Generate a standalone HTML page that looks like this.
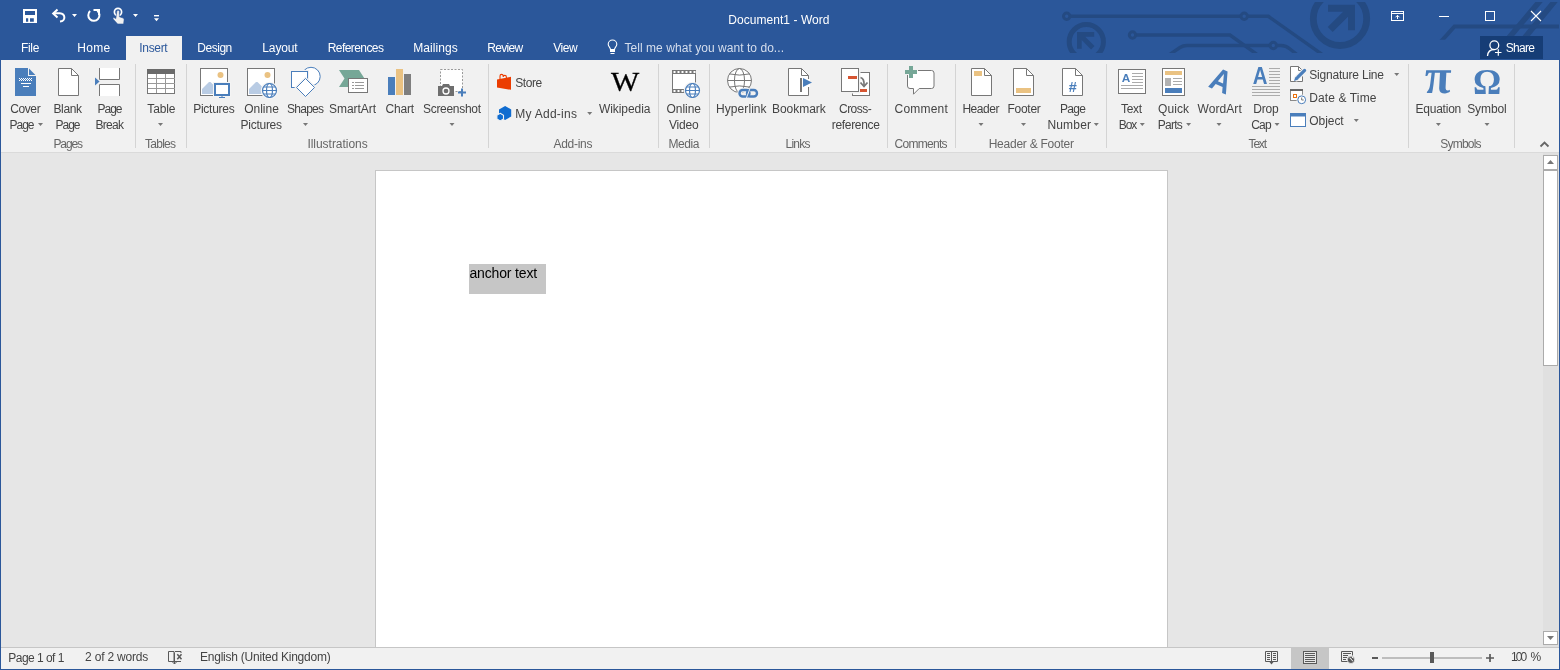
<!DOCTYPE html>
<html lang="en"><head><meta charset="utf-8"><title>Document1 - Word</title>
<style>
html,body{margin:0;padding:0}
body{width:1560px;height:670px;overflow:hidden;position:relative;background:#e6e6e6;font-family:"Liberation Sans",sans-serif}
.t{position:absolute;white-space:pre;line-height:16px;font-family:"Liberation Sans",sans-serif}
#title{position:absolute;left:0;top:0;width:1560px;height:60px;background:#2b579a}
#tab{position:absolute;left:126px;top:36px;width:56px;height:24px;background:#f1f1f1}
#ribbon{position:absolute;left:0;top:60px;width:1560px;height:92px;background:#f1f1f1;border-bottom:1px solid #dadada}
#page{position:absolute;left:375px;top:170px;width:791px;height:500px;background:#fff;border:1px solid #c6c6c6}
#sel{position:absolute;left:469px;top:264px;width:77px;height:30px;background:#c6c6c6}
#status{position:absolute;left:0;top:647px;width:1560px;height:22px;background:#f1f1f1;border-top:1px solid #c6c6c6;box-sizing:border-box}
#bl,#br,#bb{position:absolute;background:#2b579a}
#bl{left:0;top:0;width:1px;height:670px}
#br{left:1559px;top:0;width:1px;height:670px}
#bb{left:0;top:669px;width:1560px;height:1px}
svg{position:absolute;left:0;top:0;will-change:opacity}
#txt{position:absolute;left:0;top:0;width:1560px;height:670px;will-change:opacity}
.w{position:absolute;font-family:"Liberation Serif",serif;color:#000;line-height:1;white-space:pre}
</style></head>
<body>
<div id="title"></div>
<div id="tab"></div>
<div id="ribbon"></div>
<div id="page"></div>
<div id="sel"></div>
<div id="status"></div>
<svg width="1560" height="670" viewBox="0 0 1560 670">
<defs><clipPath id="pc"><rect x="1040" y="2" width="520" height="51"/></clipPath></defs>
<g clip-path="url(#pc)" fill="none" stroke="#244a82" stroke-width="3.400">
<circle cx="1066.700" cy="16.300" r="3.200" stroke-width="3"/><path d="M1070.500 16.300H1240.500"/><circle cx="1244.200" cy="16.300" r="3.200" stroke-width="3"/><path d="M1248 16.300H1268.300L1330 60"/>
<circle cx="1132.500" cy="35" r="3.200" stroke-width="3"/><path d="M1136.300 35H1230L1262 58"/>
<path d="M1166 57L1180 47.500Q1183 45.500 1187 45.500H1269.500"/><circle cx="1273.300" cy="45.500" r="3.200" stroke-width="3"/><path d="M1277 45.500H1281Q1286 45.500 1290 49L1300 57"/>
<circle cx="1086.300" cy="41.700" r="17.100" stroke-width="5"/>
<path d="M1077 32h17.200v4.700h-9l9.300 9.300-3.400 3.400-9.400-9.400v8.700h-4.700z" fill="#244a82" stroke="none"/>
<circle cx="1340" cy="18.800" r="26.700" stroke-width="6.800"/>
<path d="M1328 4.800h27v25.500h-7v-13.600l-15.300 15.300-4.900-4.900 15.300-15.300h-15.100z" fill="#244a82" stroke="none"/>
</g>
<defs><clipPath id="pc2"><rect x="1400" y="2" width="160" height="37.700"/></clipPath></defs>
<g clip-path="url(#pc2)" fill="none" stroke="#244a82"><path d="M1560 26.500H1454.500L1438 44.800" stroke-width="4"/><path d="M1505.400 42L1541 -.3M1521.300 42L1555.700 0" stroke-width="5.600"/></g>
<g fill="none" stroke="#fff">
<path d="M23 9h14v14h-14z M25 11v4h10v-4z M26 18.200v3.500h2.200v-3.500z M30 18.200v3.500h3.800v-3.500z" fill="#fff" fill-rule="evenodd" stroke="none"/>
<path d="M57.500 9.500l-4.300 4 4.300 4" stroke-width="2"/><path d="M53.500 13.300h6.200a5.300 4.200 0 0 1 .3 8.300" stroke-width="2"/>
<path d="M97.300 10.800a5.600 5.600 0 1 1-7.200 .3" stroke-width="2"/><path d="M93.500 10h5.500v5" stroke-width="2"/>
</g>
<path d="M72 14h5l-2.500 3zM133 14h5l-2.500 3zM154 18.300h5l-2.500 3z" fill="#fff"/><rect x="154" y="15" width="5" height="1.400" fill="#fff"/>
<circle cx="118" cy="12" r="3.600" fill="none" stroke="#fff" stroke-width="1.700"/>
<path d="M116.800 11.500a1.300 1.300 0 0 1 2.600 0v5.300l3.700 1.200q1.200.5 1 1.800l-.5 4.200h-6l-4.500-5q-.6-1.200.7-1.600l2 1.200z" fill="#f0f0f0" stroke="#2b579a" stroke-width=".6"/>
<path d="M610.500 49.500c0-2-2.300-2.800-2.300-5.200a4.300 4.300 0 0 1 8.600 0c0 2.400-2.300 3.200-2.300 5.200z" fill="none" stroke="#fff" stroke-width="1.100"/><path d="M610 51h5" stroke="#fff" stroke-width="2"/><path d="M610.500 53.500h4" stroke="#fff" stroke-width="1"/>
<g fill="none" stroke="#fff" shape-rendering="crispEdges"><rect x="1391.500" y="11.500" width="12" height="9"/><path d="M1392 13.500h12"/><rect x="1485.500" y="11.500" width="9" height="9"/><path d="M1439 16.500h10"/></g>
<path d="M1397.500 19v-3.500M1395.500 17.300l2-2 2 2" fill="none" stroke="#fff" stroke-width="1"/>
<path d="M1531 11l10 10M1541 11l-10 10" stroke="#fff" stroke-width="1.100" fill="none"/>
<rect x="1480" y="36" width="63" height="23" fill="#163d76"/>
<circle cx="1494.300" cy="45.300" r="4.400" fill="none" stroke="#fff" stroke-width="1.300"/><path d="M1487.500 56q.5-6.500 6.800-6.500" fill="none" stroke="#fff" stroke-width="1.300"/><path d="M1495 52.500h6.500M1498.300 49.200v6.600" stroke="#fff" stroke-width="1.200" fill="none"/>
<rect x="135" y="64" width="1" height="84" fill="#d4d4d4" shape-rendering="crispEdges"/>
<rect x="186" y="64" width="1" height="84" fill="#d4d4d4" shape-rendering="crispEdges"/>
<rect x="488" y="64" width="1" height="84" fill="#d4d4d4" shape-rendering="crispEdges"/>
<rect x="658" y="64" width="1" height="84" fill="#d4d4d4" shape-rendering="crispEdges"/>
<rect x="709" y="64" width="1" height="84" fill="#d4d4d4" shape-rendering="crispEdges"/>
<rect x="887" y="64" width="1" height="84" fill="#d4d4d4" shape-rendering="crispEdges"/>
<rect x="955" y="64" width="1" height="84" fill="#d4d4d4" shape-rendering="crispEdges"/>
<rect x="1106" y="64" width="1" height="84" fill="#d4d4d4" shape-rendering="crispEdges"/>
<rect x="1408" y="64" width="1" height="84" fill="#d4d4d4" shape-rendering="crispEdges"/>
<rect x="1514" y="64" width="1" height="84" fill="#d4d4d4" shape-rendering="crispEdges"/>
<path d="M15 68h13v8h8v20h-21z" fill="#4a7ebb"/><path d="M29 68.6l6.4 6.4h-6.4z" fill="#4a7ebb"/>
<path d="M19 78.5h13M19 80.5h13" stroke="#fff" stroke-width="1" stroke-dasharray="1 1" shape-rendering="crispEdges"/><path d="M20 79.5h12" stroke="#fff" stroke-width="1" stroke-dasharray="1 1" shape-rendering="crispEdges"/>
<rect x="21" y="83" width="10" height="1" fill="#fff"/><rect x="23" y="86" width="6" height="1" fill="#fff"/>
<path d="M38.0 123h5l-2.5 3z" fill="#777"/>
<path d="M58.5 68.5H71.5L78.5 75.5V95.5H58.5z" fill="#fff" stroke="#777"/><path d="M71.5 68.5V75.5H78.5" fill="none" stroke="#777"/>
<path d="M99.5 68v11.5h20V68M99.5 96v-11.5h20V96" fill="#fff" stroke="#777"/>
<path d="M95 77.600l4.600 3.900-4.600 3.900z" fill="#4a7ebb"/>
<rect x="147.5" y="69.5" width="27" height="24" fill="#fff" stroke="#777"/><rect x="147" y="69" width="28" height="5" fill="#6a6a6a"/>
<path d="M156.5 74v19M165.5 74v19M148 78.5h27M148 83.5h27M148 88.5h27" stroke="#999" fill="none" shape-rendering="crispEdges"/>
<path d="M158.0 123h5l-2.5 3z" fill="#777"/>
<rect x="200.5" y="68.5" width="27" height="27" fill="#fff" stroke="#777"/>
<circle cx="220.5" cy="75" r="3" fill="#eac282"/>
<path d="M202 94v-5l7-7h1.500l5.500 5.500v6.500z" fill="#b9cce4"/>
<rect x="213" y="82" width="18" height="15" fill="#f4f4f4"/>
<rect x="215" y="84" width="14" height="11" fill="#fff" stroke="#4a7ebb" stroke-width="2"/><path d="M222 96v1.500M219 97.500h6" stroke="#4a7ebb" fill="none"/>
<rect x="247.5" y="68.5" width="27" height="27" fill="#fff" stroke="#777"/>
<circle cx="267.5" cy="75" r="3" fill="#eac282"/>
<path d="M249 94v-5l7-7h1.500l5.500 5.500v6.500z" fill="#b9cce4"/>
<circle cx="269.500" cy="90.500" r="8.800" fill="#f4f4f4"/>
<g fill="none" stroke="#4a7ebb" stroke-width="1.2"><circle cx="269.5" cy="90.5" r="7" fill="#fff"/><ellipse cx="269.5" cy="90.5" rx="2.94" ry="7"/><path d="M262.5 90.5h14M263.48 87.00h12.04M263.48 94.00h12.04"/></g>
<circle cx="311" cy="76.500" r="9.200" fill="#fff" stroke="#4a7ebb"/>
<rect x="291.500" y="71.500" width="16" height="16" fill="none" stroke="#f1f1f1" stroke-width="3"/>
<rect x="291.500" y="71.500" width="16" height="16" fill="#fff" stroke="#4a7ebb"/>
<path d="M305.500 78.500l9 9-9 9-9-9z" fill="none" stroke="#f1f1f1" stroke-width="3"/>
<path d="M305.500 78.500l9 9-9 9-9-9z" fill="#fff" stroke="#4a7ebb"/>
<path d="M303.0 123h5l-2.5 3z" fill="#777"/>
<path d="M339 70h20l5.500 8.500-5.500 8.500h-20l5.500-8.500z" fill="#76a797"/>
<rect x="348.500" y="78.500" width="19" height="14" fill="#fff" stroke="#777"/>
<path d="M352 82.500h2M355 82.500h9M352 85.500h2M355 85.500h9M352 88.500h2M355 88.500h9" stroke="#999" shape-rendering="crispEdges"/>
<rect x="388" y="77" width="7" height="18" fill="#4a7ebb"/><rect x="396" y="69" width="7" height="26" fill="#eac282"/><rect x="404" y="74" width="7" height="21" fill="#7f7f7f"/>
<rect x="440.500" y="69.500" width="22" height="22" fill="#fff" stroke="#999" stroke-dasharray="2 1.500"/>
<path d="M438 86h4l1-2h6l1 2h4v10h-16z" fill="#6e6e6e"/><circle cx="446" cy="91" r="3" fill="#6e6e6e" stroke="#fff" stroke-width="1.300"/>
<path d="M458 92.500h8M462 88.500v8" stroke="#4a7ebb" stroke-width="2" fill="none"/>
<path d="M449.5 123h5l-2.5 3z" fill="#777"/>
<path d="M497 79.500l14-2.700v13l-14-2.300z" fill="#eb3c00"/>
<path d="M500 79.500v-3.400a1.600 1.700 0 0 1 3.200 0v1a1.600 1.700 0 0 1 3.200 0v2" fill="none" stroke="#eb3c00" stroke-width="1.100"/>
<path d="M505.100 105.900l6.100 3.500v7.100l-6.100 3.500-6.100-3.500v-7.100z" fill="#0f6cd0"/>
<path d="M500.200 113.300l3.300 1.900v3.800l-3.300 1.900-3.300-1.900v-3.800z" fill="#0f6cd0" stroke="#f1f1f1" stroke-width="1.100"/>
<path d="M587.2 112h5l-2.5 3z" fill="#777"/>
<rect x="672.500" y="70.500" width="23" height="22" fill="#fff" stroke="#777"/>
<rect x="672" y="70" width="24" height="4" fill="#777"/><rect x="672" y="89" width="24" height="4" fill="#777"/>
<path d="M673.500 72h22M673.500 91h22" stroke="#fff" stroke-width="2" stroke-dasharray="2 2" fill="none"/>
<circle cx="692.500" cy="90.500" r="8.800" fill="#f1f1f1"/>
<g fill="none" stroke="#4a7ebb" stroke-width="1.2"><circle cx="692.5" cy="90.5" r="7" fill="#fff"/><ellipse cx="692.5" cy="90.5" rx="2.94" ry="7"/><path d="M685.5 90.5h14M686.48 87.00h12.04M686.48 94.00h12.04"/></g>
<g fill="none" stroke="#777" stroke-width="1"><circle cx="739.5" cy="80.5" r="12" fill="#fff"/><ellipse cx="739.5" cy="80.5" rx="5.04" ry="12"/><path d="M727.5 80.5h24M729.18 73.90Q739.5 76.30 749.82 73.90M729.18 87.10Q739.5 84.70 749.82 87.10"/></g>
<g fill="none" stroke="#f1f1f1" stroke-width="4.500"><rect x="739.500" y="90" width="10" height="6.500" rx="3.250"/><rect x="747" y="90" width="10" height="6.500" rx="3.250"/></g>
<g fill="none" stroke="#4a7ebb" stroke-width="2.400"><rect x="739.500" y="90" width="10" height="6.500" rx="3.250"/><rect x="747" y="90" width="10" height="6.500" rx="3.250"/></g>
<path d="M746.300 98.200l3.600-9.400" stroke="#e8eef6" stroke-width="1" fill="none"/>
<path d="M788.5 68.5H801.5L808.5 75.5V95.5H788.5z" fill="#fff" stroke="#777"/><path d="M801.5 68.5V75.5H808.5" fill="none" stroke="#777"/>
<rect x="807" y="79" width="3" height="8" fill="#fff"/>
<rect x="800" y="78" width="2" height="14" fill="#777"/><path d="M803 78l9 4.500-9 4.500z" fill="#4a7ebb"/>
<rect x="852.500" y="72.500" width="17" height="23" fill="#fff" stroke="#777"/>
<rect x="839.500" y="66.500" width="21" height="27" fill="#f1f1f1"/>
<rect x="841.500" y="68.500" width="17" height="23" fill="#fff" stroke="#777"/>
<rect x="848" y="76" width="9" height="3" fill="#d65532"/><rect x="860" y="89" width="7" height="3" fill="#d65532"/>
<path d="M860.500 77.500q4 1 3.500 8" fill="none" stroke="#777" stroke-width="1.800"/><path d="M860.500 82.500l3.500 4 3.500-4" fill="none" stroke="#777" stroke-width="1.800"/>
<path d="M918 70.500h13.500a2.500 2.500 0 0 1 2.500 2.500v13a2.500 2.500 0 0 1-2.500 2.500h-12.300l-5.700 5.700v-5.700h-3.500a2.500 2.500 0 0 1-2.500-2.500v-11" fill="#fff" stroke="#777"/>
<path d="M909 66h4v4h4v4h-4v4h-4v-4h-4v-4h4z" fill="#76a797"/>
<path d="M971.5 68.5H984.5L991.5 75.5V95.5H971.5z" fill="#fff" stroke="#777"/><path d="M984.5 68.5V75.5H991.5" fill="none" stroke="#777"/>
<rect x="974" y="71" width="8" height="5" fill="#eac282"/>
<path d="M978.5 123h5l-2.5 3z" fill="#777"/>
<path d="M1013.5 68.5H1026.5L1033.5 75.5V95.5H1013.5z" fill="#fff" stroke="#777"/><path d="M1026.5 68.5V75.5H1033.5" fill="none" stroke="#777"/>
<rect x="1016" y="88" width="15" height="5" fill="#eac282"/>
<path d="M1021.0 123h5l-2.5 3z" fill="#777"/>
<path d="M1062.5 68.5H1075.5L1082.5 75.5V95.5H1062.5z" fill="#fff" stroke="#777"/><path d="M1075.5 68.5V75.5H1082.5" fill="none" stroke="#777"/>
<text x="1072.500" y="92" font-family="Liberation Sans, sans-serif" font-size="14.500" font-style="italic" font-weight="bold" fill="#4a7ebb" text-anchor="middle">#</text>
<path d="M1093.8 123h5l-2.5 3z" fill="#777"/>
<rect x="1118.500" y="69.500" width="27" height="24" fill="#fff" stroke="#777"/>
<text x="1126" y="82" font-family="Liberation Sans, sans-serif" font-size="11.800" font-weight="bold" fill="#4a7ebb" text-anchor="middle">A</text>
<path d="M1132 73.500h11M1132 76.500h11M1132 79.500h11M1132 82.500h11M1121 85.500h22M1121 88.500h22" stroke="#ababab" fill="none" shape-rendering="crispEdges"/>
<path d="M1139.8 123h5l-2.5 3z" fill="#777"/>
<rect x="1162.500" y="68.500" width="22" height="27" fill="#fff" stroke="#777"/>
<rect x="1165" y="71" width="17" height="4" fill="#eac282"/><rect x="1165" y="78" width="6" height="8" fill="#b2b2b2"/><rect x="1165" y="88" width="17" height="5" fill="#4a7ebb"/>
<path d="M1173 78.500h9M1173 81.500h9M1173 84.500h9" stroke="#ababab" fill="none" shape-rendering="crispEdges"/>
<path d="M1186.1 123h5l-2.5 3z" fill="#777"/>
<text x="0" y="0" font-family="Liberation Sans, sans-serif" font-size="30" font-weight="bold" fill="#4a7ebb" transform="matrix(0.881 0.387 -0.401 0.978 1207.390 86.570)">A</text>
<path d="M1216.5 123h5l-2.5 3z" fill="#777"/>
<text x="0" y="0" font-family="Liberation Sans, sans-serif" font-size="23.200" font-weight="bold" fill="#4a7ebb" transform="translate(1252.700 84) scale(.88 1)">A</text>
<path d="M1269 68.500h11M1269 71.500h11M1269 74.500h11M1269 77.500h11M1269 80.500h11M1269 83.500h11M1252 86.500h28M1252 89.500h28M1252 92.500h28M1252 95.500h28" stroke="#ababab" fill="none" shape-rendering="crispEdges"/>
<path d="M1274.5 123h5l-2.5 3z" fill="#777"/>
<path d="M1290.5 66.5H1298.5L1302.5 70.5V81.5H1290.5z" fill="#fff" stroke="#777"/><path d="M1298.5 66.5V70.5H1302.5" fill="none" stroke="#777"/>
<path d="M1305 70l-8.500 8.500" stroke="#f1f1f1" stroke-width="5.500" fill="none" stroke-linecap="round"/><path d="M1304.600 70.400l-7 7" stroke="#4a7ebb" stroke-width="3.200" fill="none" stroke-linecap="round"/><path d="M1294 81l1.500-4.300 2.800 2.800z" fill="#4a7ebb"/>
<path d="M1394.2 73h5l-2.5 3z" fill="#777"/>
<rect x="1290.500" y="89.500" width="12" height="11" fill="#fff" stroke="#8a8a8a"/><rect x="1290" y="89" width="13" height="2" fill="#666"/>
<rect x="1293.500" y="94.500" width="3" height="3" fill="#fff" stroke="#e8700f"/>
<circle cx="1301.700" cy="99.800" r="5.200" fill="#f1f1f1"/><circle cx="1301.700" cy="99.800" r="3.900" fill="#fff" stroke="#4a7ebb"/><path d="M1301.700 97.500v2.500h2" fill="none" stroke="#666" stroke-width=".9"/>
<rect x="1290.500" y="113.500" width="15" height="13" fill="#fff" stroke="#4a7ebb"/><rect x="1290" y="113" width="16" height="3.500" fill="#4a7ebb"/>
<path d="M1353.8 119h5l-2.5 3z" fill="#777"/>
<text x="0" y="0" font-family="Liberation Serif, serif" font-size="49.500" font-weight="bold" font-style="italic" fill="#4a7ebb" transform="translate(1426.600 92.800) scale(.975 1) skewX(7)">π</text>
<text x="0" y="0" font-family="Liberation Serif, serif" font-size="35.300" font-weight="bold" fill="#4a7ebb" transform="translate(1473 93.500) scale(1 1)">Ω</text>
<path d="M1435.9 123h5l-2.5 3z" fill="#777"/>
<path d="M1484.5 123h5l-2.5 3z" fill="#777"/>
<path d="M1540.500 146.500l4-4 4 4" fill="none" stroke="#666" stroke-width="1.800"/>
<g fill="none" stroke="#595959"><path d="M168.500 651.500h5.500v10h-5.500z"/><path d="M174.500 652.500v11.500M172.500 662l2 2 2-2"/><path d="M175 651.500h6v1.500M175 661.500h6"/></g>
<path d="M177.300 654.200l4.200 5M181.500 654.200l-4.200 5" stroke="#595959" stroke-width="1.500" fill="none"/>
<g fill="none" stroke="#595959"><path d="M1265.500 651.500h12v10h-12z"/><path d="M1271.500 652v10.500"/><path d="M1267 653.500h3M1267 655.500h3M1267 657.500h3M1267 659.500h3M1273 653.500h3M1273 655.500h3M1273 657.500h3M1273 659.500h3" shape-rendering="crispEdges"/></g><path d="M1269.500 662h4l-2 2.400z" fill="#595959"/>
<rect x="1291" y="648" width="38" height="21" fill="#c6c6c6"/>
<rect x="1303.500" y="651.500" width="13" height="12" fill="#e6e6e6" stroke="#595959"/><path d="M1305 653.500h10M1305 655.500h10M1305 657.500h10M1305 659.500h10M1305 661.500h10" stroke="#595959" shape-rendering="crispEdges"/>
<path d="M1349 661.500h-7.500v-10h11v4" fill="none" stroke="#595959"/><path d="M1343 653.500h8M1343 655.500h5M1343 657.500h4M1343 659.500h3" stroke="#595959" shape-rendering="crispEdges"/>
<circle cx="1351" cy="659.800" r="3.700" fill="#595959" stroke="#f1f1f1" stroke-width=".8"/><path d="M1349.500 658l1.500.5.500 1.500 1.500 1M1352 657l1.200 1.200" stroke="#f1f1f1" stroke-width="1" fill="none"/>
<rect x="1372" y="657" width="6" height="2" fill="#595959"/><rect x="1382" y="657.500" width="100" height="1" fill="#8a8a8a"/><rect x="1430" y="652" width="4" height="11" fill="#595959"/>
<path d="M1486 658h8M1490 654v8" stroke="#595959" stroke-width="1.700" fill="none"/>
<rect x="1543" y="153" width="16" height="494" fill="#e0e0e0"/>
<g fill="#fff" stroke="#ababab" shape-rendering="crispEdges"><rect x="1543.500" y="155.500" width="14" height="14"/><rect x="1543.500" y="170.500" width="14" height="195"/><rect x="1543.500" y="631.500" width="14" height="13"/></g>
<path d="M1547 164h7l-3.500-4zM1547 636h7l-3.500 4z" fill="#777"/>
</svg>
<div id="txt">
<span class="w" id="wiki" style="left:611px;top:67.7px;font-size:27.7px;transform-origin:0 0;transform:scaleX(1.08);-webkit-text-stroke:.3px #000">W</span>
<span class="t " style="left:728.30px;top:12.00px;font-size:12px;letter-spacing:0.047px;color:#fff;">Document1 - Word</span>
<span class="t " style="left:21.00px;top:40.00px;font-size:12px;letter-spacing:-0.340px;color:#fff;">File</span>
<span class="t " style="left:77.30px;top:40.00px;font-size:12px;letter-spacing:0.287px;color:#fff;">Home</span>
<span class="t " style="left:139.30px;top:40.00px;font-size:12px;letter-spacing:-0.320px;color:#2b579a;">Insert</span>
<span class="t " style="left:197.30px;top:40.00px;font-size:12px;letter-spacing:-0.476px;color:#fff;">Design</span>
<span class="t " style="left:262.30px;top:40.00px;font-size:12px;letter-spacing:-0.132px;color:#fff;">Layout</span>
<span class="t " style="left:327.70px;top:40.00px;font-size:12px;letter-spacing:-0.564px;color:#fff;">References</span>
<span class="t " style="left:413.30px;top:40.00px;font-size:12px;letter-spacing:0.051px;color:#fff;">Mailings</span>
<span class="t " style="left:487.30px;top:40.00px;font-size:12px;letter-spacing:-0.672px;color:#fff;">Review</span>
<span class="t " style="left:553.30px;top:40.00px;font-size:12px;letter-spacing:-0.467px;color:#fff;">View</span>
<span class="t " style="left:624.50px;top:40.00px;font-size:12px;letter-spacing:0.048px;color:#d5deed;">Tell me what you want to do...</span>
<span class="t " style="left:1505.70px;top:40.00px;font-size:12px;letter-spacing:-0.685px;color:#fff;">Share</span>
<span class="t " style="left:10.20px;top:101.00px;font-size:12px;letter-spacing:-0.385px;color:#444;">Cover</span>
<span class="t " style="left:9.50px;top:117.00px;font-size:12px;letter-spacing:-1.007px;color:#444;">Page</span>
<span class="t " style="left:53.50px;top:101.00px;font-size:12px;letter-spacing:-0.390px;color:#444;">Blank</span>
<span class="t " style="left:55.50px;top:117.00px;font-size:12px;letter-spacing:-1.007px;color:#444;">Page</span>
<span class="t " style="left:97.50px;top:101.00px;font-size:12px;letter-spacing:-1.007px;color:#444;">Page</span>
<span class="t " style="left:95.50px;top:117.00px;font-size:12px;letter-spacing:-0.720px;color:#444;">Break</span>
<span class="t " style="left:147.30px;top:101.00px;font-size:12px;letter-spacing:-0.170px;color:#444;">Table</span>
<span class="t " style="left:193.20px;top:101.00px;font-size:12px;letter-spacing:-0.260px;color:#444;">Pictures</span>
<span class="t " style="left:244.30px;top:101.00px;font-size:12px;letter-spacing:-0.036px;color:#444;">Online</span>
<span class="t " style="left:240.50px;top:117.00px;font-size:12px;letter-spacing:-0.260px;color:#444;">Pictures</span>
<span class="t " style="left:287.00px;top:101.00px;font-size:12px;letter-spacing:-0.736px;color:#444;">Shapes</span>
<span class="t " style="left:329.00px;top:101.00px;font-size:12px;letter-spacing:-0.049px;color:#444;">SmartArt</span>
<span class="t " style="left:385.50px;top:101.00px;font-size:12px;letter-spacing:-0.210px;color:#444;">Chart</span>
<span class="t " style="left:423.00px;top:101.00px;font-size:12px;letter-spacing:-0.302px;color:#444;">Screenshot</span>
<span class="t " style="left:515.30px;top:75.00px;font-size:12px;letter-spacing:-0.445px;color:#444;">Store</span>
<span class="t " style="left:515.30px;top:106.00px;font-size:12px;letter-spacing:0.251px;color:#444;">My Add-ins</span>
<span class="t " style="left:599.00px;top:101.00px;font-size:12px;letter-spacing:-0.072px;color:#444;">Wikipedia</span>
<span class="t " style="left:666.50px;top:101.00px;font-size:12px;letter-spacing:-0.036px;color:#444;">Online</span>
<span class="t " style="left:669.00px;top:117.00px;font-size:12px;letter-spacing:-0.220px;color:#444;">Video</span>
<span class="t " style="left:716.00px;top:101.00px;font-size:12px;letter-spacing:0.075px;color:#444;">Hyperlink</span>
<span class="t " style="left:772.00px;top:101.00px;font-size:12px;letter-spacing:-0.037px;color:#444;">Bookmark</span>
<span class="t " style="left:839.00px;top:101.00px;font-size:12px;letter-spacing:-0.528px;color:#444;">Cross-</span>
<span class="t " style="left:831.70px;top:117.00px;font-size:12px;letter-spacing:-0.300px;color:#444;">reference</span>
<span class="t " style="left:894.50px;top:101.00px;font-size:12px;letter-spacing:0.213px;color:#444;">Comment</span>
<span class="t " style="left:962.40px;top:101.00px;font-size:12px;letter-spacing:-0.432px;color:#444;">Header</span>
<span class="t " style="left:1007.50px;top:101.00px;font-size:12px;letter-spacing:-0.276px;color:#444;">Footer</span>
<span class="t " style="left:1060.00px;top:101.00px;font-size:12px;letter-spacing:-0.673px;color:#444;">Page</span>
<span class="t " style="left:1047.40px;top:117.00px;font-size:12px;letter-spacing:0.188px;color:#444;">Number</span>
<span class="t " style="left:1121.00px;top:101.00px;font-size:12px;letter-spacing:-0.340px;color:#444;">Text</span>
<span class="t " style="left:1118.80px;top:117.00px;font-size:12px;letter-spacing:-1.100px;color:#444;">Box</span>
<span class="t " style="left:1158.00px;top:101.00px;font-size:12px;letter-spacing:0.070px;color:#444;">Quick</span>
<span class="t " style="left:1157.70px;top:117.00px;font-size:12px;letter-spacing:-0.730px;color:#444;">Parts</span>
<span class="t " style="left:1197.50px;top:101.00px;font-size:12px;letter-spacing:0.083px;color:#444;">WordArt</span>
<span class="t " style="left:1253.30px;top:101.00px;font-size:12px;letter-spacing:-0.213px;color:#444;">Drop</span>
<span class="t " style="left:1251.30px;top:117.00px;font-size:12px;letter-spacing:-0.860px;color:#444;">Cap</span>
<span class="t " style="left:1309.30px;top:67.00px;font-size:12px;letter-spacing:-0.208px;color:#444;">Signature Line</span>
<span class="t " style="left:1309.30px;top:90.00px;font-size:12px;letter-spacing:0.110px;color:#444;">Date &amp; Time</span>
<span class="t " style="left:1309.30px;top:113.00px;font-size:12px;letter-spacing:-0.056px;color:#444;">Object</span>
<span class="t " style="left:1415.50px;top:101.00px;font-size:12px;letter-spacing:-0.229px;color:#444;">Equation</span>
<span class="t " style="left:1467.20px;top:101.00px;font-size:12px;letter-spacing:-0.104px;color:#444;">Symbol</span>
<span class="t " style="left:53.50px;top:136.00px;font-size:12px;letter-spacing:-1.130px;color:#666;">Pages</span>
<span class="t " style="left:145.00px;top:136.00px;font-size:12px;letter-spacing:-0.736px;color:#666;">Tables</span>
<span class="t " style="left:307.40px;top:136.00px;font-size:12px;letter-spacing:-0.027px;color:#666;">Illustrations</span>
<span class="t " style="left:553.40px;top:136.00px;font-size:12px;letter-spacing:-0.263px;color:#666;">Add-ins</span>
<span class="t " style="left:668.60px;top:136.00px;font-size:12px;letter-spacing:-0.490px;color:#666;">Media</span>
<span class="t " style="left:785.50px;top:136.00px;font-size:12px;letter-spacing:-0.755px;color:#666;">Links</span>
<span class="t " style="left:894.50px;top:136.00px;font-size:12px;letter-spacing:-0.717px;color:#666;">Comments</span>
<span class="t " style="left:988.70px;top:136.00px;font-size:12px;letter-spacing:-0.246px;color:#666;">Header &amp; Footer</span>
<span class="t " style="left:1248.60px;top:136.00px;font-size:12px;letter-spacing:-1.207px;color:#666;">Text</span>
<span class="t " style="left:1440.30px;top:136.00px;font-size:12px;letter-spacing:-0.787px;color:#666;">Symbols</span>
<span class="t " style="left:8.30px;top:650.00px;font-size:12px;letter-spacing:-0.538px;color:#444;">Page 1 of 1</span>
<span class="t " style="left:85.00px;top:649.00px;font-size:12px;letter-spacing:-0.185px;color:#444;">2 of 2 words</span>
<span class="t " style="left:200.00px;top:649.00px;font-size:12px;letter-spacing:-0.234px;color:#444;">English (United Kingdom)</span>
<span class="t " style="left:1511.00px;top:649.00px;font-size:12px;letter-spacing:-1.870px;color:#444;">100</span>
<span class="t " style="left:1530.50px;top:649.00px;font-size:12px;letter-spacing:0.000px;color:#444;">%</span>
<span class="t " style="left:469.50px;top:265.00px;font-size:14px;letter-spacing:-0.163px;color:#000;">anchor text</span>
</div>
<div id="bl"></div><div id="br"></div><div id="bb"></div>
</body></html>
